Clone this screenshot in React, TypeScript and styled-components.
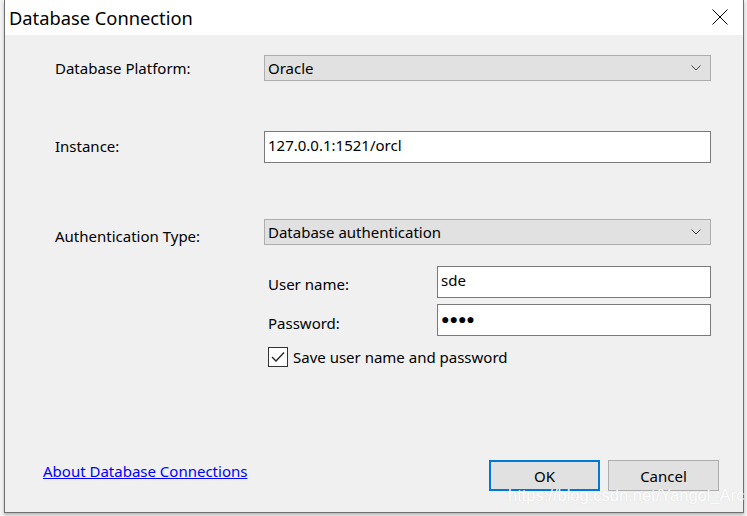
import React from "react";
import styled, { createGlobalStyle } from "styled-components";

const Global = createGlobalStyle`
  html, body { margin: 0; padding: 0; }
  body {
    background: #f3f3f3;
    width: 747px;
    height: 516px;
    overflow: hidden;
    font-family: "Noto Sans", "Open Sans", sans-serif;
  }
`;

const Screen = styled.div`
  position: relative;
  width: 747px;
  height: 516px;
  padding-left: 4px;
  box-sizing: border-box;
`;

const Window = styled.div`
  width: 740px;
  height: 513px;
  box-sizing: border-box;
  border: 1px solid #6f6f6f;
  border-top: none;
  display: flex;
  flex-direction: column;
  box-shadow: 0 2px 3px rgba(0, 0, 0, 0.25);
  background: #f0f0f0;
`;

const TitleBar = styled.div`
  height: 35px;
  background: #ffffff;
  display: flex;
  align-items: center;
  justify-content: space-between;
  padding: 0 15px 0 4px;
  flex: none;
`;

const Title = styled.div`
  font-size: 18.3px;
  color: #000;
  margin-top: -1px;
`;

const CloseBtn = styled.div`
  width: 16px;
  height: 16px;
  display: flex;
  margin-top: -1px;
`;

const Body = styled.div`
  flex: 1;
  display: flex;
  flex-direction: column;
  padding: 0 30px 21px 50px;
`;

const Row = styled.div<{ $top: number }>`
  display: grid;
  grid-template-columns: 209px 447px;
  align-items: center;
  margin-top: ${(p) => p.$top}px;
`;

const Label = styled.div<{ $shift?: number }>`
  font-size: 15px;
  color: #000;
  white-space: nowrap;
  transform: translateY(${(p) => p.$shift ?? 0}px);
`;

const Select = styled.div`
  height: 26px;
  box-sizing: border-box;
  border: 1px solid #adadad;
  background: #e1e1e1;
  display: flex;
  align-items: center;
  justify-content: space-between;
  padding: 0 9px 0 3px;
  font-size: 15px;
  color: #000;
`;

const Input = styled.div<{ $h: number }>`
  height: ${(p) => p.$h}px;
  box-sizing: border-box;
  border: 1px solid #7a7a7a;
  background: #ffffff;
  padding: 3px 3px 0 3px;
  font-size: 15px;
  color: #000;
  line-height: 20px;
`;

const Dots = styled.span`
  font-size: 14px;
  line-height: 20px;
`;

const SubPanel = styled.div`
  margin-left: 213px;
  display: flex;
  flex-direction: column;
`;

const SubRow = styled.div<{ $top: number }>`
  display: grid;
  grid-template-columns: 169px 274px;
  align-items: center;
  margin-top: ${(p) => p.$top}px;
`;

const CheckRow = styled.div`
  display: flex;
  align-items: center;
  gap: 5px;
  margin-top: 11px;
  font-size: 15px;
  color: #000;
`;

const CheckBox = styled.div`
  width: 20px;
  height: 20px;
  box-sizing: border-box;
  border: 1px solid #333333;
  background: #ffffff;
  display: flex;
  align-items: center;
  justify-content: center;
`;

const Footer = styled.div`
  margin-top: auto;
  margin-left: -12px;
  margin-right: -6px;
  display: flex;
  align-items: center;
`;

const Link = styled.a`
  font-size: 15px;
  color: #0000ff;
  text-decoration: underline;
  margin-bottom: 9px;
  cursor: pointer;
`;

const Buttons = styled.div`
  margin-left: auto;
  display: flex;
  gap: 8px;
`;

const Button = styled.div<{ $primary?: boolean }>`
  width: 111px;
  height: 31px;
  box-sizing: border-box;
  border: ${(p) => (p.$primary ? "2px solid #0078d7" : "1px solid #adadad")};
  background: #e1e1e1;
  display: flex;
  align-items: center;
  justify-content: center;
  font-size: 15px;
  color: #000;
`;

const Watermark = styled.div`
  position: absolute;
  left: 508px;
  top: 486px;
  font-family: "Liberation Sans", Arial, sans-serif;
  font-size: 16.5px;
  color: rgba(255, 255, 255, 0.95);
  text-shadow: 0 0 1px rgba(150, 150, 150, 0.25);
  white-space: nowrap;
  pointer-events: none;
`;

const Chevron = () => (
  <svg width="10" height="6" viewBox="0 0 10 6">
    <path d="M0.5 0.5 L5 5 L9.5 0.5" fill="none" stroke="#444" strokeWidth="1" />
  </svg>
);

const CloseIcon = () => (
  <svg width="16" height="16" viewBox="0 0 16 16">
    <path d="M0.5 0.5 L15.5 15.5 M15.5 0.5 L0.5 15.5" stroke="#000" strokeWidth="1" />
  </svg>
);

const CheckIcon = () => (
  <svg width="14" height="12" viewBox="0 0 14 12">
    <path d="M1 6 L5 10 L13 1.5" fill="none" stroke="#222" strokeWidth="1.3" />
  </svg>
);

export default function App() {
  return (
    <>
      <Global />
      <Screen>
        <Window>
          <TitleBar>
            <Title>Database Connection</Title>
            <CloseBtn>
              <CloseIcon />
            </CloseBtn>
          </TitleBar>
          <Body>
            <Row $top={20}>
              <Label>Database Platform:</Label>
              <Select>
                <span>Oracle</span>
                <Chevron />
              </Select>
            </Row>
            <Row $top={50}>
              <Label $shift={-1}>Instance:</Label>
              <Input $h={32}>127.0.0.1:1521/orcl</Input>
            </Row>
            <Row $top={56}>
              <Label $shift={4}>Authentication Type:</Label>
              <Select>
                <span>Database authentication</span>
                <Chevron />
              </Select>
            </Row>
            <SubPanel>
              <SubRow $top={21}>
                <Label $shift={2}>User name:</Label>
                <Input $h={32}>sde</Input>
              </SubRow>
              <SubRow $top={6}>
                <Label $shift={3}>Password:</Label>
                <Input $h={32}>
                  <Dots>●●●●</Dots>
                </Input>
              </SubRow>
              <CheckRow>
                <CheckBox>
                  <CheckIcon />
                </CheckBox>
                <span>Save user name and password</span>
              </CheckRow>
            </SubPanel>
            <Footer>
              <Link>About Database Connections</Link>
              <Buttons>
                <Button $primary>OK</Button>
                <Button>Cancel</Button>
              </Buttons>
            </Footer>
          </Body>
        </Window>
        <Watermark>https://blog.csdn.net/Yangol_Arc</Watermark>
      </Screen>
    </>
  );
}
